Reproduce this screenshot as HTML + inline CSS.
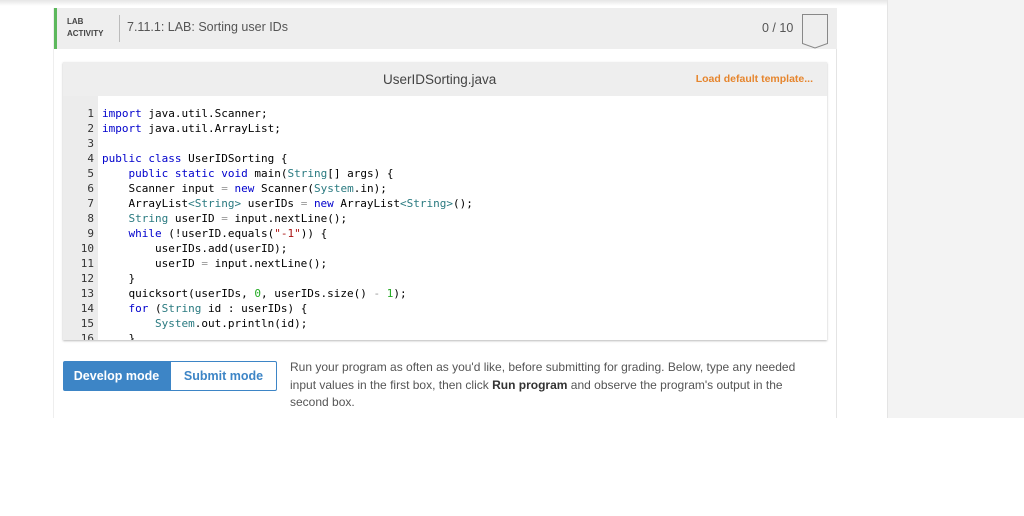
<!DOCTYPE html>
<html><head><style>
*{margin:0;padding:0;box-sizing:border-box}
body{width:1024px;height:516px;background:#fff;position:relative;overflow:hidden;font-family:"Liberation Sans",sans-serif;color:#333}
.top{position:absolute;left:0;top:0;width:887px;height:6px;background:linear-gradient(#e6e6e6,#fff)}
.rp{position:absolute;left:887px;top:0;width:137px;height:418px;background:#f3f3f3;border-left:1px solid #e4e4e4}
.card{position:absolute;left:53px;top:8px;width:784px;height:410px;background:#fff;border-right:1px solid #e4e4e4;border-left:1px solid #eee}
.hdr{position:absolute;left:0;top:0;width:783px;height:41px;background:#eee;border-left:3px solid #5cb85c}
.lab{position:absolute;left:10px;top:8px;font-size:8px;font-weight:bold;line-height:12px;color:#444}
.sep{position:absolute;left:62px;top:7px;width:1px;height:27px;background:#bbb}
.title{position:absolute;left:70px;top:12px;font-size:12.5px;color:#555}
.score{position:absolute;left:705px;top:13px;font-size:12.5px;color:#555}
.ed{position:absolute;left:63px;top:62px;width:764px;height:278px;box-shadow:0 1px 2px #bbb}
.edh{height:34px;background:#eee;position:relative}
.fn{position:absolute;left:320px;top:10px;font-size:13.5px;color:#444}
.ld{position:absolute;right:14px;top:11px;font-size:10.5px;font-weight:bold;color:#e6852d}
.code{position:absolute;top:34px;left:0;width:764px;height:244px;background:#fff;overflow:hidden}
.gut{position:absolute;left:0;top:0;width:35px;height:244px;background:#ececec}
pre{position:absolute;top:10px;left:0;font-family:"DejaVu Sans Mono",monospace;font-size:11px;line-height:15px;color:#000}
.n{display:inline-block;width:31px;text-align:right;color:#333;margin-right:8px}
.k{color:#00c}.t{color:#2a7a80}.s{color:#a11}.d{color:#2a2}.o{color:#999}
.bd{position:absolute;left:63px;top:361px;width:107px;height:30px;background:#3d85c6;color:#fff;font-size:12.5px;font-weight:bold;text-align:center;line-height:30px;border-radius:2px 0 0 2px}
.bs{position:absolute;left:170px;top:361px;width:107px;height:30px;border:1px solid #3d85c6;color:#3d85c6;font-size:12.5px;font-weight:bold;text-align:center;line-height:28px;border-radius:0 2px 2px 0}
.txt{position:absolute;left:290px;top:359px;width:525px;font-size:12px;line-height:17.5px;color:#555}
.txt b{color:#333}
</style></head><body>
<div class="top"></div>
<div class="rp"></div>
<div class="card">
 <div class="hdr">
  <div class="lab">LAB<br>ACTIVITY</div>
  <div class="sep"></div>
  <div class="title">7.11.1: LAB: Sorting user IDs</div>
  <div class="score">0 / 10</div>
  <svg style="position:absolute;left:744px;top:5px" width="28" height="38"><path d="M1.5 1.5H26.5V30.5L14 35L1.5 30.5Z" fill="none" stroke="#888" stroke-width="1"/></svg>
 </div>
</div>
<div class="ed">
 <div class="edh"><div class="fn">UserIDSorting.java</div><div class="ld">Load default template...</div></div>
 <div class="code"><div class="gut"></div>
<pre><span class="n">1</span><span class="k">import</span> java.util.Scanner;
<span class="n">2</span><span class="k">import</span> java.util.ArrayList;
<span class="n">3</span>
<span class="n">4</span><span class="k">public</span> <span class="k">class</span> UserIDSorting {
<span class="n">5</span>    <span class="k">public</span> <span class="k">static</span> <span class="k">void</span> main(<span class="t">String</span>[] args) {
<span class="n">6</span>    Scanner input <span class="o">=</span> <span class="k">new</span> Scanner(<span class="t">System</span>.in);
<span class="n">7</span>    ArrayList<span class="t">&lt;String&gt;</span> userIDs <span class="o">=</span> <span class="k">new</span> ArrayList<span class="t">&lt;String&gt;</span>();
<span class="n">8</span>    <span class="t">String</span> userID <span class="o">=</span> input.nextLine();
<span class="n">9</span>    <span class="k">while</span> (!userID.equals(<span class="s">"-1"</span>)) {
<span class="n">10</span>        userIDs.add(userID);
<span class="n">11</span>        userID <span class="o">=</span> input.nextLine();
<span class="n">12</span>    }
<span class="n">13</span>    quicksort(userIDs, <span class="d">0</span>, userIDs.size() <span class="o">-</span> <span class="d">1</span>);
<span class="n">14</span>    <span class="k">for</span> (<span class="t">String</span> id : userIDs) {
<span class="n">15</span>        <span class="t">System</span>.out.println(id);
<span class="n">16</span>    }
</pre>
 </div>
</div>
<div class="bd">Develop mode</div>
<div class="bs">Submit mode</div>
<div class="txt">Run your program as often as you'd like, before submitting for grading. Below, type any needed input values in the first box, then click <b>Run program</b> and observe the program's output in the second box.</div>
</body></html>
